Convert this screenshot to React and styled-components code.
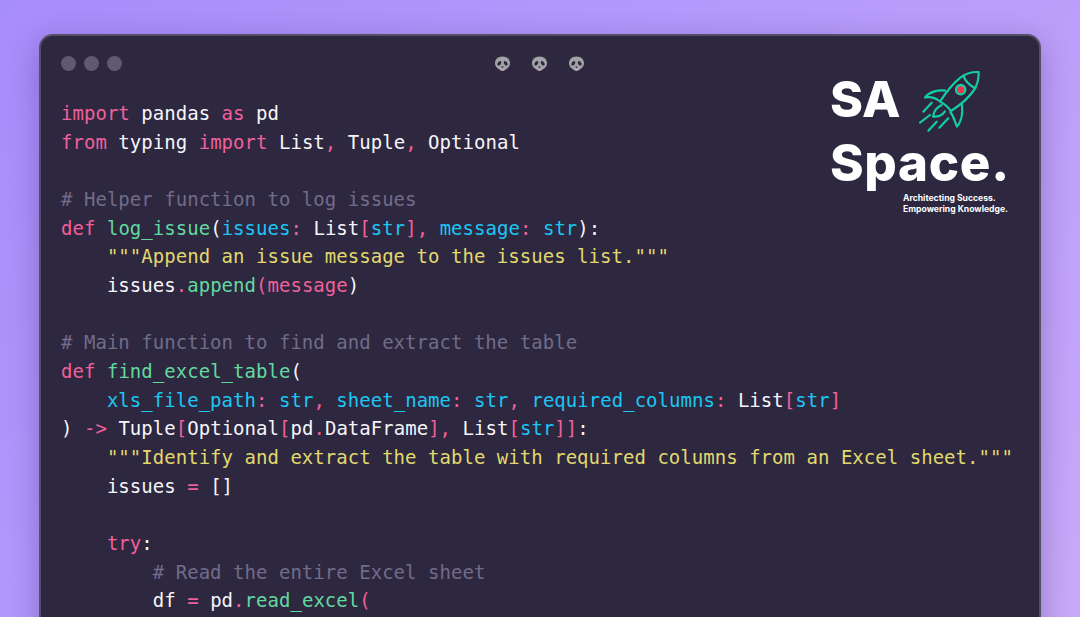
import styled, { createGlobalStyle } from "styled-components";

const GlobalStyle = createGlobalStyle`
  html, body {
    margin: 0;
    height: 100%;
    overflow: hidden;
  }
  #root {
    height: 100%;
  }
`;

const colors = {
  kw: "#f0609a",
  fn: "#62d99f",
  param: "#1cc6f4",
  str: "#e2d86e",
  comment: "#716c88",
  plain: "#f6f5f9",
};

const Page = styled.div`
  height: 617px;
  overflow: hidden;
  box-sizing: border-box;
  padding: 34px 39px 0 39px;
  background: linear-gradient(135deg, #a78cfb 0%, #b79bfb 50%, #c8a8f8 100%);
`;

const Window = styled.div`
  position: relative;
  height: 640px;
  box-sizing: border-box;
  border: 2px solid #544e66;
  border-bottom: 0;
  border-radius: 14px 14px 0 0;
  background: #2d2740;
  box-shadow: 0 8px 30px rgba(40, 20, 90, 0.3);
  padding: 0 20px;
`;

const TitleBar = styled.div`
  height: 54px;
  display: flex;
  align-items: center;
`;

const Dots = styled.div`
  display: flex;
  gap: 8px;
`;

const Dot = styled.span`
  width: 15px;
  height: 15px;
  border-radius: 50%;
  background: #5f5a70;
`;

const Pandas = styled.div`
  position: absolute;
  top: 19px;
  left: 453px;
  display: flex;
  gap: 20px;
`;

const Code = styled.pre`
  margin: 9px 0 0;
  font-family: "DejaVu Sans Mono", "Liberation Mono", monospace;
  font-size: 19px;
  letter-spacing: 0.03px;
  line-height: 28.65px;
  color: ${colors.plain};
`;

const Token = styled.span`
  color: ${(p) => colors[p.$t]};
`;

const Logo = styled.div`
  position: absolute;
  top: 35px;
  left: 789px;
  width: 190px;
  color: #fff;
  font-family: "Inter", "Open Sans", sans-serif;
`;

const LogoWord = styled.div`
  font-size: ${(p) => p.$size}px;
  font-weight: 800;
  line-height: 56px;
  letter-spacing: ${(p) => p.$track}px;
  margin-top: ${(p) => p.$top}px;
`;

const Tagline = styled.div`
  margin: 2px 0 0 73px;
  font-size: 8.6px;
  font-weight: 700;
  line-height: 11px;
  white-space: nowrap;
`;

const RocketMark = styled.svg`
  position: absolute;
  top: -11px;
  left: 70px;
`;

function PandaIcon() {
  return (
    <svg width="17" height="17" viewBox="0 0 17 17">
      <circle cx="3" cy="3" r="2.6" fill="#2f2d36" />
      <circle cx="14" cy="3" r="2.6" fill="#2f2d36" />
      <path d="M8.5 1.5C3.6 1.5 1 4.6 1 8.2c0 2.6 1.4 4.3 3.2 5.6C5.6 15 7 16 8.5 16s2.9-1 4.3-2.2C14.6 12.5 16 10.8 16 8.2c0-3.6-2.6-6.7-7.5-6.7z" fill="#a3a1a9" />
      <path d="M6.9 6.4c-1-.9-2.8.5-3.4 2-.5 1.3.3 2.4 1.5 2.1 1.4-.4 2.9-3.1 1.9-4.1z" fill="#2c2a33" />
      <path d="M10.1 6.4c1-.9 2.8.5 3.4 2 .5 1.3-.3 2.4-1.5 2.1-1.4-.4-2.9-3.1-1.9-4.1z" fill="#2c2a33" />
      <path d="M7.2 11.6h2.6L8.5 13.2z" fill="#26242b" />
      <ellipse cx="8.5" cy="14.6" rx="1.5" ry="0.9" fill="#d8a0ae" />
    </svg>
  );
}

// coordinates follow a 3x crop of the mark, hence the large viewBox
function Rocket() {
  return (
    <RocketMark
      width="90"
      height="80"
      viewBox="0 0 270 240"
      fill="none"
      stroke="#12cfa0"
      strokeWidth="6.5"
      strokeLinecap="round"
      strokeLinejoin="round"
    >
      <path d="M236 36c-20-1-38 4-55 17-20 16-43 44-61 72 8 3 24 16 33 28 30-19 52-39 67-60 11-16 17-35 16-57z" />
      <path d="M190 47c5 15 17 28 36 38" />
      <path d="M136 92c-20-3-46 2-61 20 15-2 30 0 43 11" />
      <path d="M186 135c3 24-1 48-15 65-7-15-9-31-20-44" />
      <path d="M125 135c-13 6-24 18-26 35 16 1 29-6 36-16" />
      <path d="M95 128l-25 27M90 165l-30 23M110 185l-25 27M145 175l-27 28" />
      <circle cx="182" cy="89" r="14" fill="#f8334f" strokeWidth="7" />
    </RocketMark>
  );
}

// each line is a list of plain strings and [colour key, text] pairs
const lines = [
  [["kw", "import"], " pandas ", ["kw", "as"], " pd"],
  [["kw", "from"], " typing ", ["kw", "import"], " List", ["kw", ","], " Tuple", ["kw", ","], " Optional"],
  [],
  [["comment", "# Helper function to log issues"]],
  [["kw", "def"], " ", ["fn", "log_issue"], "(", ["param", "issues"], ["kw", ":"], " List", ["kw", "["], ["param", "str"], ["kw", "],"], " ", ["param", "message"], ["kw", ":"], " ", ["param", "str"], "):"],
  [["str", '    """Append an issue message to the issues list."""']],
  ["    issues", ["kw", "."], ["fn", "append"], ["kw", "(message"], ")"],
  [],
  [["comment", "# Main function to find and extract the table"]],
  [["kw", "def"], " ", ["fn", "find_excel_table"], "("],
  ["    ", ["param", "xls_file_path"], ["kw", ":"], " ", ["param", "str"], ["kw", ","], " ", ["param", "sheet_name"], ["kw", ":"], " ", ["param", "str"], ["kw", ","], " ", ["param", "required_columns"], ["kw", ":"], " List", ["kw", "["], ["param", "str"], ["kw", "]"]],
  [") ", ["kw", "->"], " Tuple", ["kw", "["], "Optional", ["kw", "["], "pd", ["kw", "."], "DataFrame", ["kw", "],"], " List", ["kw", "["], ["param", "str"], ["kw", "]]"], ":"],
  [["str", '    """Identify and extract the table with required columns from an Excel sheet."""']],
  ["    issues ", ["kw", "="], " []"],
  [],
  [["kw", "    try"], ":"],
  [["comment", "        # Read the entire Excel sheet"]],
  ["        df ", ["kw", "="], " pd", ["kw", "."], ["fn", "read_excel"], ["kw", "("]],
];

export default function App() {
  return (
    <Page>
      <GlobalStyle />
      <Window>
        <TitleBar>
          <Dots>
            <Dot />
            <Dot />
            <Dot />
          </Dots>
          <Pandas>
            <PandaIcon />
            <PandaIcon />
            <PandaIcon />
          </Pandas>
        </TitleBar>
        <Code>
          {lines.map((line, i) => (
            <div key={i}>
              {line.length === 0
                ? " "
                : line.map((part, j) =>
                    typeof part === "string" ? (
                      <span key={j}>{part}</span>
                    ) : (
                      <Token key={j} $t={part[0]}>
                        {part[1]}
                      </Token>
                    )
                  )}
            </div>
          ))}
        </Code>
        <Logo>
          <LogoWord $size={50} $track={0} $top={0}>SA</LogoWord>
          <LogoWord $size={51} $track={0.7} $top={8}>Space.</LogoWord>
          <Tagline>
            Architecting Success.
            <br />
            Empowering Knowledge.
          </Tagline>
          <Rocket />
        </Logo>
      </Window>
    </Page>
  );
}
